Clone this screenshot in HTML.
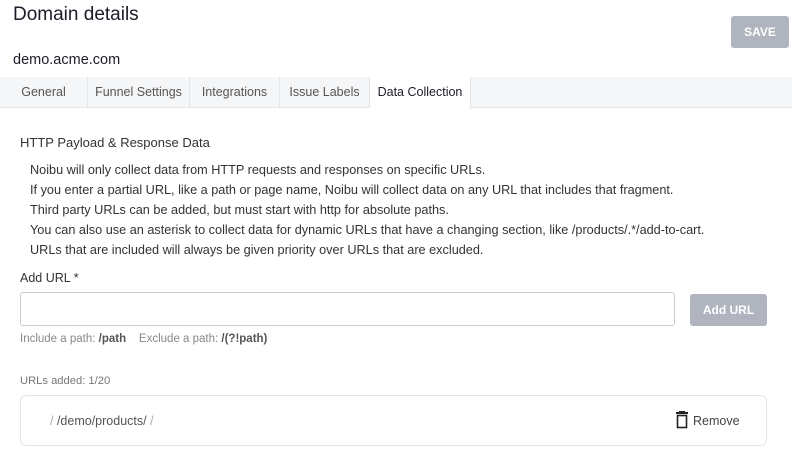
<!DOCTYPE html>
<html><head><style>
*{margin:0;padding:0;box-sizing:border-box}
body{width:792px;height:454px;background:#fff;font-family:"Liberation Sans",sans-serif;color:#222;position:relative;overflow:hidden}
.a{position:absolute;white-space:nowrap}
.tab{position:absolute;top:77px;height:31px;line-height:30px;font-size:12.5px;color:#555;text-align:center;border-right:1px solid #e2e5ea}
p.l{position:absolute;left:30px;font-size:12.7px;color:#333;white-space:nowrap}
</style></head><body>
<div class="a" style="left:13px;top:4px;font-size:19px;color:#1c1c28">Domain details</div>
<div class="a" style="left:731px;top:16px;width:58px;height:32px;background:#b0b4bf;border-radius:3px;color:#fff;font-weight:bold;font-size:12px;text-align:center;line-height:32px">SAVE</div>
<div class="a" style="left:13px;top:52px;font-size:14.5px;color:#1c1c28">demo.acme.com</div>
<div class="a" style="left:0;top:77px;width:792px;height:31px;background:#f5f6f8;border-bottom:1px solid #e2e5ea"></div>
<div class="tab" style="left:0;width:88px">General</div>
<div class="tab" style="left:88px;width:102px">Funnel Settings</div>
<div class="tab" style="left:190px;width:90px">Integrations</div>
<div class="tab" style="left:280px;width:90px">Issue Labels</div>
<div class="tab" style="left:370px;width:101px;background:#fff;color:#1c1c28;height:32px">Data Collection</div>
<div class="a" style="left:20px;top:135px;font-size:13px;color:#333">HTTP Payload &amp; Response Data</div>
<p class="l" style="top:163px">Noibu will only collect data from HTTP requests and responses on specific URLs.</p>
<p class="l" style="top:183px">If you enter a partial URL, like a path or page name, Noibu will collect data on any URL that includes that fragment.</p>
<p class="l" style="top:203px">Third party URLs can be added, but must start with http for absolute paths.</p>
<p class="l" style="top:223px">You can also use an asterisk to collect data for dynamic URLs that have a changing section, like /products/.*/add-to-cart.</p>
<p class="l" style="top:243px">URLs that are included will always be given priority over URLs that are excluded.</p>
<div class="a" style="left:20px;top:271px;font-size:12.5px;color:#333">Add URL *</div>
<div class="a" style="left:20px;top:292px;width:655px;height:34px;border:1px solid #c8ccd3;border-radius:3px"></div>
<div class="a" style="left:690px;top:294px;width:77px;height:32px;background:#b0b4bf;border-radius:3px;color:#fff;font-weight:bold;font-size:12px;text-align:center;line-height:32px">Add URL</div>
<div class="a" style="left:20px;top:333px;font-size:11.5px;color:#888">Include a path: <b style="color:#555">/path</b> &nbsp;&nbsp; Exclude a path: <b style="color:#555">/(?!path)</b></div>
<div class="a" style="left:20px;top:375px;font-size:11.2px;color:#777">URLs added: 1/20</div>
<div class="a" style="left:20px;top:395px;width:747px;height:51px;border:1px solid #e2e5ea;border-radius:6px"></div>
<div class="a" style="left:50px;top:414px;font-size:12.5px;color:#555"><span style="color:#aaa">/</span> /demo/products/ <span style="color:#aaa">/</span></div>
<svg class="a" style="left:675px;top:411px" width="14" height="18" viewBox="0 0 14 18"><rect x="1" y="1" width="12" height="2" fill="#222"/><rect x="4" y="0" width="6" height="2" fill="#222"/><rect x="2.5" y="4.5" width="9" height="12" fill="none" stroke="#222" stroke-width="1.6"/></svg>
<div class="a" style="left:693px;top:414px;font-size:12.5px;color:#444">Remove</div>
</body></html>
